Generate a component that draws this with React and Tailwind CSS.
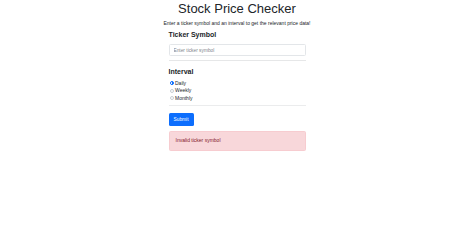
import React, { useState } from "react";

const intervals = ["Daily", "Weekly", "Monthly"];

function Radio({ checked }) {
  return (
    <span
      className={`mr-[1.5px] inline-flex h-[4px] w-[4px] shrink-0 items-center justify-center rounded-full border-[0.5px] ${
        checked ? "border-[#0d6efd] bg-[#0d6efd]" : "border-[#c8cdd2] bg-white"
      }`}
    >
      {checked && <span className="h-[1.6px] w-[1.6px] rounded-full bg-white" />}
    </span>
  );
}

export default function App() {
  const [ticker, setTicker] = useState("");
  const [interval, setInterval] = useState("Daily");

  return (
    <div className="min-h-[251px] w-full bg-white font-['Liberation_Sans',Arial,sans-serif] text-[#212529]">
      <h1 className="pt-[1px] text-center text-[13px] leading-[15px] font-normal">Stock Price Checker</h1>
      <p className="mt-[4px] text-center text-[5px] leading-[6px]">
        Enter a ticker symbol and an interval to get the relevant price data!
      </p>

      <form className="mx-auto mt-[5px] w-[137px]" onSubmit={(e) => e.preventDefault()}>
        <h2 className="text-[7px] leading-[8px] font-semibold">Ticker Symbol</h2>
        <input
          type="text"
          value={ticker}
          onChange={(e) => setTicker(e.target.value)}
          placeholder="Enter ticker symbol"
          className="mt-[5px] block h-[12px] w-full rounded-[1.5px] border-[0.5px] border-[#e3e6e9] px-[4px] text-[4.8px] outline-none placeholder:text-[#80868c]"
        />
        <div className="mt-[4px] h-[1px] w-full bg-[#e6e7e8]" />

        <h2 className="mt-[6.5px] text-[7px] leading-[8px] font-semibold">Interval</h2>
        <div className="mt-[4px] flex flex-col pl-[1px]">
          {intervals.map((name) => (
            <label
              key={name}
              className="flex h-[7.5px] items-center text-[5px] leading-[7.5px]"
              onClick={() => setInterval(name)}
            >
              <Radio checked={interval === name} />
              {name}
            </label>
          ))}
        </div>
        <div className="mt-[2.5px] h-[1.5px] w-full bg-[#ebeced]" />

        <button
          type="submit"
          className="mt-[7px] flex h-[12.5px] w-[25px] items-center justify-center rounded-[1.5px] bg-[#0d6efd] text-[4.8px] text-white"
        >
          Submit
        </button>

        <div className="mt-[5.5px] flex h-[20px] items-center rounded-[1.5px] border-[0.5px] border-[#f7ccd0] bg-[#f8d7da] pl-[6px] text-[5px] text-[#842029]">
          Invalid ticker symbol
        </div>
      </form>
    </div>
  );
}
